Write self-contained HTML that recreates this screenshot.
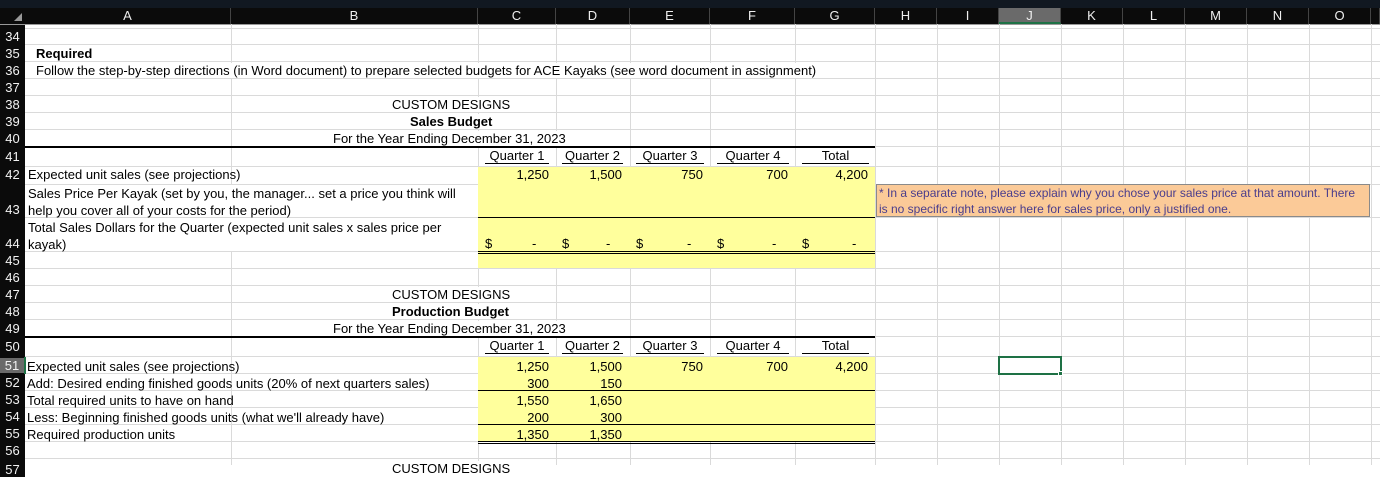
<!DOCTYPE html>
<html><head><meta charset="utf-8"><style>
*{margin:0;padding:0;box-sizing:border-box}
body{width:1380px;height:465px;overflow:hidden;background:#fff;position:relative;font-family:"Liberation Sans",Arial,sans-serif;font-size:13px;color:#000}
div{position:absolute}
.v{width:1px;background:#dadada;top:24px;height:441px}
.h{height:1px;background:#dadada;left:25px;width:1355px}
.rh{left:0;width:25px;background:#0b0b0b;color:#f2f2f2;text-align:center;font-size:13px;line-height:15px}
.ch{top:8px;height:16px;background:#0b0b0b;color:#eee;text-align:center;line-height:16px;font-size:13px;border-right:1px solid #444}
.t{white-space:nowrap;line-height:15px}
.tb{background:#fff}
.y{background:#ffff9c}
.n{text-align:right;white-space:nowrap;line-height:15px}
.q{height:15px;line-height:14px;text-align:center;border-bottom:1px solid #000;white-space:nowrap}
.bl{height:1px;background:#000}
</style></head><body>
<div style="left:0;top:0;width:1380px;height:8px;background:#111821"></div>
<div style="left:0;top:8px;width:25px;height:16px;background:#0b0b0b"></div>
<div style="left:14px;top:13px;width:0;height:0;border-left:8px solid transparent;border-bottom:8px solid #999"></div>
<div class="ch" style="left:25px;width:206px">A</div>
<div class="ch" style="left:231px;width:247px">B</div>
<div class="ch" style="left:478px;width:78px">C</div>
<div class="ch" style="left:556px;width:74px">D</div>
<div class="ch" style="left:630px;width:80px">E</div>
<div class="ch" style="left:710px;width:85px">F</div>
<div class="ch" style="left:795px;width:80px">G</div>
<div class="ch" style="left:875px;width:62px">H</div>
<div class="ch" style="left:937px;width:62px">I</div>
<div class="ch" style="left:999px;width:62px;background:#6a6a6a;border-bottom:2px solid #1e7145">J</div>
<div class="ch" style="left:1061px;width:62px">K</div>
<div class="ch" style="left:1123px;width:62px">L</div>
<div class="ch" style="left:1185px;width:62px">M</div>
<div class="ch" style="left:1247px;width:62px">N</div>
<div class="ch" style="left:1309px;width:62px">O</div>
<div class="ch" style="left:1371px;width:9px"></div>
<div style="left:0;top:24px;width:1380px;height:1px;background:#999"></div>
<div style="left:0;top:25px;width:25px;height:440px;background:#0b0b0b"></div>

<div class="v" style="left:231px"></div><div class="v" style="left:478px"></div><div class="v" style="left:556px"></div><div class="v" style="left:630px"></div><div class="v" style="left:710px"></div><div class="v" style="left:795px"></div><div class="v" style="left:875px"></div><div class="v" style="left:937px"></div><div class="v" style="left:999px"></div><div class="v" style="left:1061px"></div><div class="v" style="left:1123px"></div><div class="v" style="left:1185px"></div><div class="v" style="left:1247px"></div><div class="v" style="left:1309px"></div><div class="v" style="left:1371px"></div>
<div class="h" style="top:28px"></div><div class="h" style="top:44px"></div><div class="h" style="top:61px"></div><div class="h" style="top:78px"></div><div class="h" style="top:95px"></div><div class="h" style="top:112px"></div><div class="h" style="top:129px"></div><div class="h" style="top:146px"></div><div class="h" style="top:166px"></div><div class="h" style="top:184px"></div><div class="h" style="top:217px"></div><div class="h" style="top:251px"></div><div class="h" style="top:268px"></div><div class="h" style="top:285px"></div><div class="h" style="top:302px"></div><div class="h" style="top:319px"></div><div class="h" style="top:336px"></div><div class="h" style="top:356px"></div><div class="h" style="top:373px"></div><div class="h" style="top:390px"></div><div class="h" style="top:407px"></div><div class="h" style="top:424px"></div><div class="h" style="top:441px"></div><div class="h" style="top:458px"></div>

<div style="left:26px;top:185px;width:452px;height:32px;background:#fff"></div>
<div style="left:26px;top:218px;width:452px;height:33px;background:#fff"></div>

<div class="rh" style="top:29px">34</div><div class="rh" style="top:46px">35</div><div class="rh" style="top:63px">36</div><div class="rh" style="top:80px">37</div><div class="rh" style="top:97px">38</div><div class="rh" style="top:114px">39</div><div class="rh" style="top:131px">40</div><div class="rh" style="top:149px">41</div><div class="rh" style="top:167px">42</div><div class="rh" style="top:202px">43</div><div class="rh" style="top:236px">44</div><div class="rh" style="top:253px">45</div><div class="rh" style="top:270px">46</div><div class="rh" style="top:287px">47</div><div class="rh" style="top:304px">48</div><div class="rh" style="top:321px">49</div><div class="rh" style="top:339px">50</div><div class="rh" style="top:358px;background:#6a6a6a;width:24px">51</div><div class="rh" style="top:375px">52</div><div class="rh" style="top:392px">53</div><div class="rh" style="top:409px">54</div><div class="rh" style="top:426px">55</div><div class="rh" style="top:443px">56</div><div class="rh" style="top:462px">57</div>
<div style="left:24px;top:357px;width:2px;height:17px;background:#1e7145"></div>

<div class="y" style="left:478px;top:167px;width:397px;height:101px"></div>
<div class="y" style="left:478px;top:357px;width:397px;height:84px"></div>

<div class="t" style="left:36px;top:46px;font-weight:bold">Required</div>
<div class="t tb" style="left:36px;top:63px;padding-right:2px">Follow the step-by-step directions (in Word document) to prepare selected budgets for ACE Kayaks (see word document in assignment)</div>

<div class="t tb" style="left:392px;top:97px">CUSTOM DESIGNS</div>
<div class="t tb" style="left:410px;top:114px;font-weight:bold">Sales Budget</div>
<div class="t tb" style="left:333px;top:131px">For the Year Ending December 31, 2023</div>
<div class="bl" style="left:25px;top:146px;width:850px;height:2px"></div>

<div class="q" style="left:485px;top:149px;width:64px">Quarter 1</div>
<div class="q" style="left:562px;top:149px;width:61px">Quarter 2</div>
<div class="q" style="left:636px;top:149px;width:68px">Quarter 3</div>
<div class="q" style="left:717px;top:149px;width:72px">Quarter 4</div>
<div class="q" style="left:802px;top:149px;width:67px">Total</div>

<div class="t" style="left:28px;top:167px">Expected unit sales (see projections)</div>
<div class="n" style="left:478px;top:167px;width:71px">1,250</div>
<div class="n" style="left:556px;top:167px;width:66px">1,500</div>
<div class="n" style="left:630px;top:167px;width:73px">750</div>
<div class="n" style="left:710px;top:167px;width:78px">700</div>
<div class="n" style="left:795px;top:167px;width:73px">4,200</div>

<div class="t" style="left:28px;top:185px;line-height:17px">Sales Price Per Kayak (set by you, the manager... set a price you think will<br>help you cover all of your costs for the period)</div>
<div class="bl" style="left:478px;top:217px;width:397px"></div>
<div class="t" style="left:28px;top:219px;line-height:17px">Total Sales Dollars for the Quarter (expected unit sales x sales price per<br>kayak)</div>
<div class="t" style="left:485px;top:236px">$</div><div class="t" style="left:532px;top:236px">-</div>
<div class="t" style="left:562px;top:236px">$</div><div class="t" style="left:606px;top:236px">-</div>
<div class="t" style="left:636px;top:236px">$</div><div class="t" style="left:687px;top:236px">-</div>
<div class="t" style="left:717px;top:236px">$</div><div class="t" style="left:772px;top:236px">-</div>
<div class="t" style="left:802px;top:236px">$</div><div class="t" style="left:852px;top:236px">-</div>
<div class="bl" style="left:478px;top:251px;width:397px"></div>
<div class="bl" style="left:478px;top:253px;width:397px"></div>

<div style="left:876px;top:184px;width:494px;height:33px;background:#fbca98;border:1px solid #8a8a8a;color:#4a3d8c;font-size:12px;letter-spacing:0;line-height:16px;padding-left:2px;white-space:nowrap;overflow:hidden">* In a separate note, please explain why you chose your sales price at that amount. There<br>is no specific right answer here for sales price, only a justified one.</div>

<div class="t tb" style="left:392px;top:287px">CUSTOM DESIGNS</div>
<div class="t tb" style="left:392px;top:304px;font-weight:bold">Production Budget</div>
<div class="t tb" style="left:333px;top:321px">For the Year Ending December 31, 2023</div>
<div class="bl" style="left:25px;top:336px;width:850px;height:2px"></div>

<div class="q" style="left:485px;top:339px;width:64px">Quarter 1</div>
<div class="q" style="left:562px;top:339px;width:61px">Quarter 2</div>
<div class="q" style="left:636px;top:339px;width:68px">Quarter 3</div>
<div class="q" style="left:717px;top:339px;width:72px">Quarter 4</div>
<div class="q" style="left:802px;top:339px;width:67px">Total</div>

<div class="t" style="left:27px;top:359px">Expected unit sales (see projections)</div>
<div class="t" style="left:27px;top:376px">Add: Desired ending finished goods units (20% of next quarters sales)</div>
<div class="t" style="left:27px;top:393px">Total required units to have on hand</div>
<div class="t" style="left:27px;top:410px">Less: Beginning finished goods units (what we'll already have)</div>
<div class="t" style="left:27px;top:427px">Required production units</div>

<div class="n" style="left:478px;top:359px;width:71px">1,250</div>
<div class="n" style="left:556px;top:359px;width:66px">1,500</div>
<div class="n" style="left:630px;top:359px;width:73px">750</div>
<div class="n" style="left:710px;top:359px;width:78px">700</div>
<div class="n" style="left:795px;top:359px;width:73px">4,200</div>
<div class="n" style="left:478px;top:376px;width:71px">300</div>
<div class="n" style="left:556px;top:376px;width:66px">150</div>
<div class="bl" style="left:478px;top:390px;width:397px"></div>
<div class="n" style="left:478px;top:393px;width:71px">1,550</div>
<div class="n" style="left:556px;top:393px;width:66px">1,650</div>
<div class="n" style="left:478px;top:410px;width:71px">200</div>
<div class="n" style="left:556px;top:410px;width:66px">300</div>
<div class="bl" style="left:478px;top:424px;width:397px"></div>
<div class="n" style="left:478px;top:427px;width:71px">1,350</div>
<div class="n" style="left:556px;top:427px;width:66px">1,350</div>
<div class="bl" style="left:478px;top:441px;width:397px"></div>
<div class="bl" style="left:478px;top:443px;width:397px"></div>

<div class="t tb" style="left:392px;top:461px">CUSTOM DESIGNS</div>

<div style="left:998px;top:356px;width:64px;height:19px;border:2px solid #1e7145"></div>
<div style="left:1058px;top:371px;width:5px;height:5px;background:#1e7145;border:1px solid #fff"></div>
</body></html>
